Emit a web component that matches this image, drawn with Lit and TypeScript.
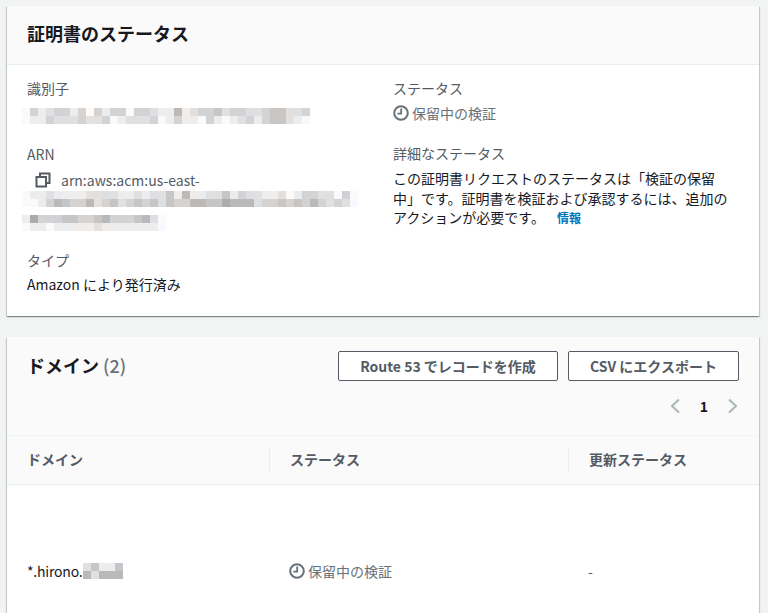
import { LitElement, html, css, svg } from "lit";
import { customElement } from "lit/decorators.js";

const tints = [0, 2, -3, 0, 3, -2, 0, 0, -4, 2, 0, 3];

function mosaic(rows: string[], cw = 8, ch = 8) {
  const width = rows[0].length * cw;
  const height = rows.length * ch;
  const rects = rows.flatMap((row, r) =>
    [...row].map((d, c) => {
      const g = 250 - Number(d) * 13;
      const t = tints[(c * 5 + r * 7) % tints.length];
      return svg`<rect x=${c * cw} y=${r * ch} width=${cw} height=${ch} fill=${`rgb(${g + t},${g},${g - t})`}></rect>`;
    })
  );
  return html`<svg class="mosaic" width=${width} height=${height} viewBox="0 0 ${width} ${height}" shape-rendering="crispEdges">${rects}</svg>`;
}

const clock = html`<svg class="clock" width="16" height="16" viewBox="0 0 16 16" fill="none" stroke="#687078" stroke-width="2"><circle cx="8" cy="8" r="6.8"></circle><path d="M8.2 3.6V8.7H4.4" stroke-width="1.8"></path></svg>`;

@customElement("app-root")
export class AppRoot extends LitElement {
  static styles = css`
    :host {
      display: block;
      width: 768px;
      height: 613px;
      overflow: hidden;
      background: #f2f3f3;
      font-family: "Noto Sans CJK JP", "Open Sans", sans-serif;
      font-size: 14px;
      color: #16191f;
      padding: 6px 9px 0 7px;
      box-sizing: border-box;
    }
    * { box-sizing: border-box; }
    .card {
      background: #fff;
      box-shadow: 0 1px 1px 0 rgba(0,28,36,.3), 1px 1px 1px 0 rgba(0,28,36,.15), -1px 1px 1px 0 rgba(0,28,36,.15);
    }
    .c1 { height: 310px; margin-bottom: 21px; }
    .c1-head {
      height: 59px;
      background: #fafafa;
      border-bottom: 1px solid #eaeded;
      padding: 0 20px 4px;
      display: flex;
      align-items: center;
    }
    h2 {
      margin: 0;
      font-size: 18px;
      font-weight: 700;
      line-height: 24px;
      color: #16191f;
    }
    .c1-body {
      display: grid;
      grid-template-columns: 366px 1fr;
      padding: 12px 20px 0;
    }
    .col { display: flex; flex-direction: column; }
    .label { font-size: 14px; line-height: 22px; color: #545b64; height: 22px; }
    .id-block { margin: 9px 0 0 -5px; height: 16px; }
    .f-arn { margin-top: 19px; }
    .arn-line {
      display: flex;
      align-items: center;
      gap: 10px;
      padding-left: 8px;
      height: 22px;
      margin-top: 4px;
      color: #545b64;
    }
    .arn-mosaic { margin: 0 0 0 -5px; height: 40px; display: flex; flex-direction: column; gap: 8px; }
    .f-type { margin-top: 18px; }
    .type-val { margin-top: 2px; color: #16191f; line-height: 22px; }
    .status-line {
      display: flex;
      align-items: center;
      gap: 3px;
      line-height: 22px;
      color: #687078;
      margin-top: 3px;
    }
    .f-detail { margin-top: 18px; }
    .desc { margin: 5px 0 0; line-height: 19.6px; color: #16191f; width: 340px; }
    a { color: #0073bb; text-decoration: none; font-size: 12px; font-weight: 700; margin-left: 12px; }
    .c2 { height: 300px; }
    .c2-head {
      height: 99px;
      background: #fafafa;
      border-bottom: 1px solid #f2f3f3;
      padding: 14px 20px 0;
      display: flex;
      justify-content: space-between;
    }
    .t { display: flex; align-items: baseline; gap: 4px; padding-top: 1px; }
    .count { color: #687078; font-size: 18px; font-weight: 500; }
    .actions { display: flex; flex-direction: column; align-items: flex-end; }
    .btns { display: flex; gap: 10px; }
    button {
      height: 30px;
      border: 1px solid #545b64;
      border-radius: 2px;
      background: #fff;
      color: #545b64;
      font: 700 14px "Noto Sans CJK JP", "Open Sans", sans-serif;
      padding: 0;
      display: flex;
      align-items: center;
      justify-content: center;
      white-space: nowrap;
    }
    .b1 { width: 220px; }
    .b2 { width: 171px; }
    .pager { display: flex; align-items: center; gap: 19px; height: 30px; margin-top: 10px; font-weight: 700; color: #16191f; }
    .thead, .row {
      display: grid;
      grid-template-columns: 262px 299px 1fr;
      align-items: center;
    }
    .thead {
      height: 49px;
      background: #fafafa;
      border-bottom: 1px solid #eaeded;
    }
    .th {
      height: 24px;
      padding-left: 20px;
      font-weight: 700;
      color: #545b64;
      line-height: 22px;
      border-left: 1px solid #eaeded;
    }
    .th:first-child { border-left: none; }
    .row { height: 171px; }
    .cell { padding-left: 20px; color: #545b64; display: flex; align-items: center; line-height: 22px; }
    .cell.first { color: #16191f; letter-spacing: -0.2px; }
    .cell.st { color: #687078; gap: 3px; }
    .mosaic { display: block; flex: none; filter: blur(0.4px); }
  `;

  render() {
    return html`
      <section class="card c1">
        <div class="c1-head"><h2>証明書のステータス</h2></div>
        <div class="c1-body">
          <div class="col">
            <div class="field">
              <div class="label">識別子</div>
              <div class="id-block">${mosaic([
                "031233130313303321151233423322344223",
                "011322232230122230131103101231344210",
              ])}</div>
            </div>
            <div class="field f-arn">
              <div class="label">ARN</div>
              <div class="arn-line">
                <svg width="16" height="16" viewBox="0 0 16 16" fill="none" stroke="#545b64" stroke-width="2"><rect x="1.5" y="5" width="9.5" height="9.5"></rect><path d="M5 4V1.5H14.5V11H12"></path></svg>
                <span>arn:aws:acm:us-east-</span>
              </div>
              <div class="arn-mosaic">
                ${mosaic([
                  "011211112222112122415112241322112013322030",
                  "001354335234234342433554465552334343532320",
                ])}
                ${mosaic([
                  "163334433453334520",
                  "011011111211111110",
                ])}
              </div>
            </div>
            <div class="field f-type">
              <div class="label">タイプ</div>
              <div class="type-val">Amazon により発行済み</div>
            </div>
          </div>
          <div class="col">
            <div class="field">
              <div class="label">ステータス</div>
              <div class="status-line">${clock}<span>保留中の検証</span></div>
            </div>
            <div class="field f-detail">
              <div class="label">詳細なステータス</div>
              <p class="desc">この証明書リクエストのステータスは「検証の保留中」です。証明書を検証および承認するには、追加のアクションが必要です。<a href="#">情報</a></p>
            </div>
          </div>
        </div>
      </section>
      <section class="card c2">
        <div class="c2-head">
          <div class="t"><h2>ドメイン</h2><span class="count">(2)</span></div>
          <div class="actions">
            <div class="btns">
              <button class="b1">Route 53 でレコードを作成</button>
              <button class="b2">CSV にエクスポート</button>
            </div>
            <div class="pager">
              <svg width="12" height="16" viewBox="0 0 12 16" fill="none" stroke="#aab7b8" stroke-width="2"><path d="M10 1.5 L3 8 L10 14.5"></path></svg>
              <span>1</span>
              <svg width="12" height="16" viewBox="0 0 12 16" fill="none" stroke="#aab7b8" stroke-width="2"><path d="M2 1.5 L9 8 L2 14.5"></path></svg>
            </div>
          </div>
        </div>
        <div class="thead">
          <div class="th">ドメイン</div>
          <div class="th">ステータス</div>
          <div class="th">更新ステータス</div>
        </div>
        <div class="row">
          <div class="cell first"><span>*.hirono.</span>${mosaic(["24114", "52555"])}</div>
          <div class="cell st">${clock}<span>保留中の検証</span></div>
          <div class="cell"><span>-</span></div>
        </div>
      </section>
    `;
  }
}
